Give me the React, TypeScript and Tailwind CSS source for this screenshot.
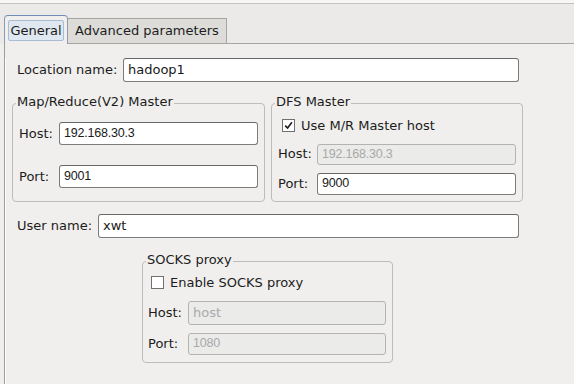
import React from 'react';

const narrow = "font-['Liberation_Sans',sans-serif] text-[12.5px] tracking-[-0.2px]";

const Box = ({ checked }: { checked?: boolean }) => (
  <span className="flex h-[13px] w-[13px] shrink-0 items-center justify-center border border-[#707070] bg-white">
    {checked && (
      <svg width="9" height="9" viewBox="0 0 9 9">
        <path d="M1.2 4.6L3.6 7.1L7.9 1.3" fill="none" stroke="#1e1e1e" strokeWidth="1.6" />
      </svg>
    )}
  </span>
);

const Field = ({
  value,
  w,
  h = 'h-[24px]',
  mono,
  disabled,
}: {
  value: string;
  w: string;
  h?: string;
  mono?: boolean;
  disabled?: boolean;
}) => (
  <div
    className={`${w} ${h} flex shrink-0 items-center rounded-[3px] border pl-[4px] ${
      disabled
        ? 'border-[#b3b3b3] bg-[#ebebea] text-[#a9a9a9]'
        : 'border-[#7c7c7c] border-t-[#6a6a6a] bg-white text-[#1a1a1a]'
    } ${mono ? narrow : ''}`}
  >
    {value}
  </div>
);

// group box with title sitting on the top border
const Group = ({ title, className, children }: { title: string; className: string; children: React.ReactNode }) => (
  <fieldset className={`rounded-[4px] border border-[#bdbcba] ${className}`}>
    <legend className="ml-[3px] px-[1px] leading-[14px]">
      <span className="relative -top-[1px]">{title}</span>
    </legend>
    {children}
  </fieldset>
);

export default function App() {
  return (
    <div className="flex h-[384px] w-[574px] flex-col overflow-hidden bg-[#f0efed] font-['DejaVu_Sans',sans-serif] text-[13px] text-[#1c1c1c]">
      <div className="h-[3px] bg-[#f7f6f5]" />
      <div className="border-t border-[#c3c2c0]" />

      {/* tab strip */}
      <div className="flex h-[40px] items-end bg-[#ebeae8] pl-[4px]">
        <div className="flex h-[29px] w-[64px] flex-col rounded-t-[4px] border border-b-0 border-[#8b9bb0] border-t-[#6f8db5] bg-[#f0efed] px-[3px] pt-[4px]">
          <div className="flex h-[21px] items-center justify-center rounded-[2px] border border-[#a9bcd3] bg-[#dfe7f0]">
            General
          </div>
        </div>
        <div className="flex h-[26px] items-center border border-l-0 border-[#a6a5a3] bg-[#dddcd9] px-[7px]">
          Advanced parameters
        </div>
        <div className="h-[1px] flex-1 bg-[#a6a5a3]" />
      </div>

      {/* panel */}
      <div className="ml-[4px] flex-1 border-l border-[#9e9d9b]">
        <div className="h-full border-l border-white pl-[6px]">
          <div className="mt-[14px] flex items-center">
            <span className="w-[111px] shrink-0 pl-[5px]">Location name:</span>
            <Field value="hadoop1" w="w-[396px]" />
          </div>

          <div className="mt-[14px] flex gap-[6px]">
            <Group title="Map/Reduce(V2) Master" className="w-[253px] pb-[13px]">
              <div className="pl-[6px]">
                <div className="mt-[12px] flex items-center">
                  <span className="w-[40px]">Host:</span>
                  <Field value="192.168.30.3" w="w-[199px]" h="h-[23px]" mono />
                </div>
                <div className="mt-[20px] flex items-center">
                  <span className="w-[40px]">Port:</span>
                  <Field value="9001" w="w-[199px]" h="h-[23px]" mono />
                </div>
              </div>
            </Group>
            <Group title="DFS Master" className="w-[252px] pb-[5px]">
              <div className="pl-[6px]">
                <div className="mt-[6px] flex items-center gap-[6px] pl-[4px]">
                  <Box checked />
                  <span>Use M/R Master host</span>
                </div>
                <div className="mt-[8px] flex items-center">
                  <span className="w-[39px]">Host:</span>
                  <Field value="192.168.30.3" w="w-[199px]" h="h-[21px]" mono disabled />
                </div>
                <div className="mt-[8px] flex items-center">
                  <span className="w-[39px]">Port:</span>
                  <Field value="9000" w="w-[199px]" h="h-[22px]" mono />
                </div>
              </div>
            </Group>
          </div>

          <div className="mt-[12px] flex items-center">
            <span className="w-[86px] shrink-0 pl-[5px]">User name:</span>
            <Field value="xwt" w="w-[421px]" />
          </div>

          <div className="flex w-[511px] justify-center">
            <Group title="SOCKS proxy" className="mt-[16px] w-[251px] pb-[7px]">
              <div className="pl-[5px]">
                <div className="mt-[5px] flex items-center gap-[6px] pl-[3px]">
                  <Box />
                  <span>Enable SOCKS proxy</span>
                </div>
                <div className="mt-[8px] flex items-center">
                  <span className="w-[40px]">Host:</span>
                  <Field value="host" w="w-[198px]" h="h-[24px]" disabled />
                </div>
                <div className="mt-[8px] flex items-center">
                  <span className="w-[40px]">Port:</span>
                  <Field value="1080" w="w-[198px]" h="h-[22px]" mono disabled />
                </div>
              </div>
            </Group>
          </div>
        </div>
      </div>
    </div>
  );
}
